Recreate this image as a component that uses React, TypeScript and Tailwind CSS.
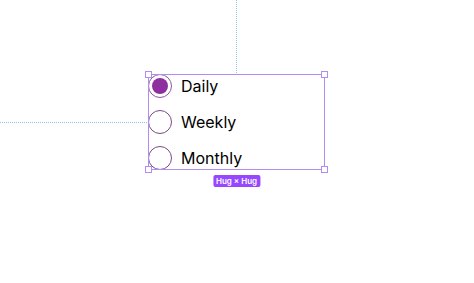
import React from 'react';

// Радио-группа, выделенная на холсте редактора (Hug × Hug)
const options = [
  { label: 'Daily', checked: true },
  { label: 'Weekly', checked: false },
  { label: 'Monthly', checked: false },
];

const Radio: React.FC<{ checked: boolean }> = ({ checked }) => (
  <span
    className={`flex h-6 w-6 shrink-0 items-center justify-center rounded-full bg-white ${
      checked ? 'border-[1.5px] border-[#8a5a98]' : 'border border-[#7a4a88]'
    }`}
  >
    {checked && <span className="h-4 w-4 rounded-full bg-[#8e2f9f]" />}
  </span>
);

const Handle: React.FC<{ pos: string }> = ({ pos }) => (
  <span className={`absolute h-[7px] w-[7px] border border-[#b08cf3] bg-white ${pos}`} />
);

export default function App() {
  return (
    <div
      className="relative h-[283px] w-[474px] overflow-hidden bg-white"
      style={{ fontFamily: 'Inter, "Noto Sans", sans-serif' }}
    >
      {/* направляющие отступов */}
      <div className="absolute left-[236px] top-0 h-[73px] border-l border-dotted border-[#8ec8e8]" />
      <div className="absolute left-0 top-[122px] w-[147px] border-t border-dotted border-[#8ec8e8]" />

      <div className="pl-[148px] pt-[74px]">
        <div className="relative w-[177px]">
          <div className="flex flex-col gap-3">
            {options.map((o) => (
              <div key={o.label} className="flex h-6 items-center gap-[9px]">
                <Radio checked={o.checked} />
                <span className="text-[16px] leading-6 text-black">{o.label}</span>
              </div>
            ))}
          </div>

          {/* рамка выделения */}
          <div className="pointer-events-none absolute inset-0 border border-[#b08cf3]" />
          <Handle pos="-left-[3px] -top-[3px]" />
          <Handle pos="-right-[3px] -top-[3px]" />
          <Handle pos="-left-[3px] -bottom-[3px]" />
          <Handle pos="-right-[3px] -bottom-[3px]" />

          <div className="absolute left-1/2 top-[101px] -translate-x-1/2 whitespace-nowrap rounded-[2px] bg-[#9747ff] px-[3px] text-[8px] font-semibold leading-[12px] text-white">
            Hug × Hug
          </div>
        </div>
      </div>
    </div>
  );
}
